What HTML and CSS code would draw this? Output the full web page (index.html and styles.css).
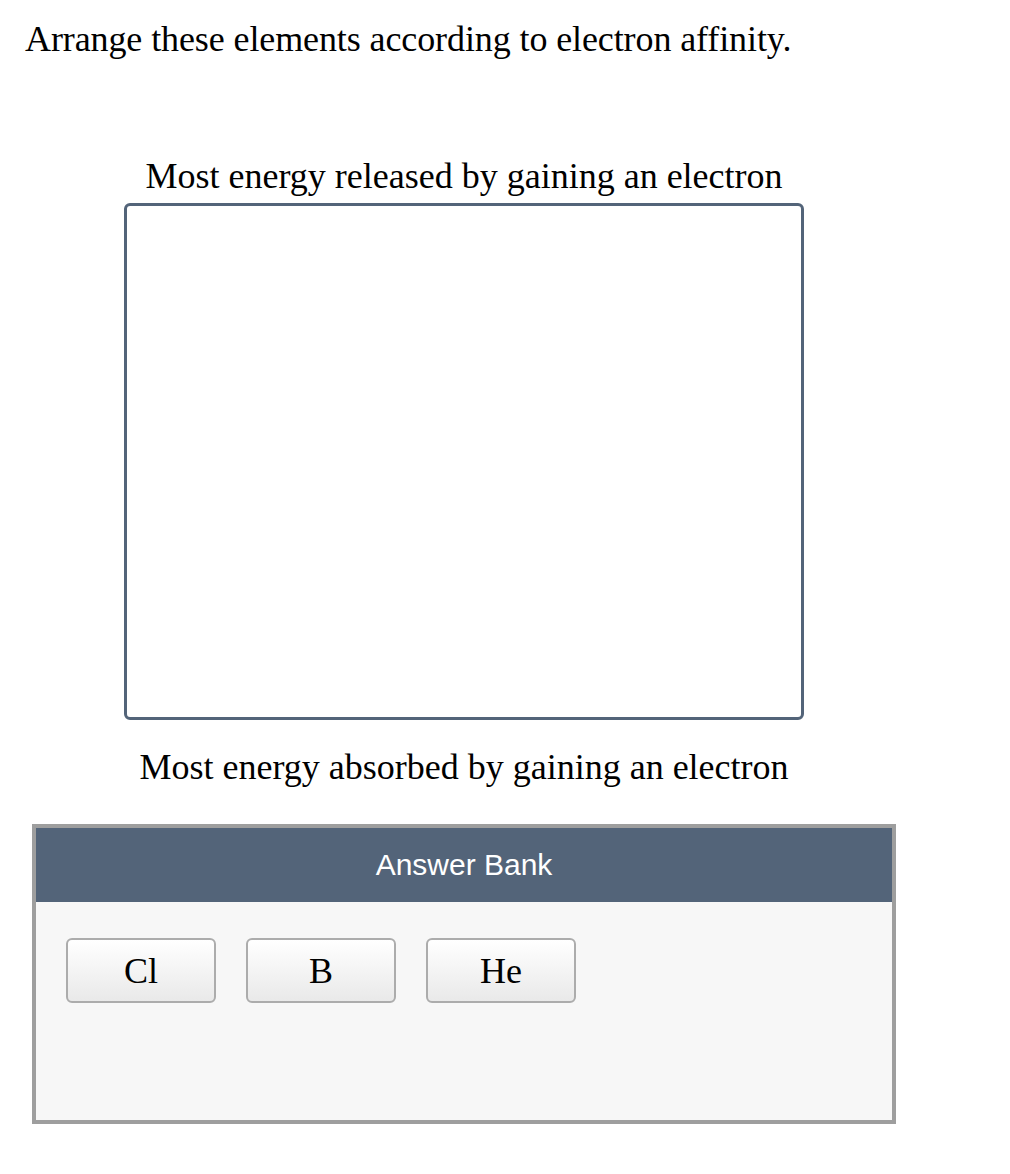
FILE: index.html
```html
<!DOCTYPE html>
<html lang="en">
<head>
    <meta charset="UTF-8">
    <title>Electron Affinity Ranking</title>
    <link rel="stylesheet" href="styles.css">
</head>
<body>
    <p class="prompt">Arrange these elements according to electron affinity.</p>

    <div class="sorter">
        <div class="label label-top">Most energy released by gaining an electron</div>
        <div class="drop-zone" id="dropZone"></div>
        <div class="label label-bottom">Most energy absorbed by gaining an electron</div>

        <div class="answer-bank">
            <div class="bank-header">Answer Bank</div>
            <div class="bank-tiles" id="bankTiles">
                <div class="tile">Cl</div>
                <div class="tile">B</div>
                <div class="tile">He</div>
            </div>
        </div>
    </div>
</body>
</html>
```

FILE: styles.css
```css
body {
    margin: 0;
    font-family: "Liberation Serif", "Times New Roman", serif;
    color: #000;
    background: #fff;
}
.prompt {
    margin: 0;
    padding: 19px 0 0 25px;
    font-size: 36px;
    line-height: 41px;
    letter-spacing: -0.1px;
}
.sorter {
    width: 864px;
    margin-left: 32px;
    display: flex;
    flex-direction: column;
    align-items: center;
}
.label {
    font-size: 36px;
    line-height: 41px;
    text-align: center;
}
.label-top {
    margin-top: 96px;
}
.drop-zone {
    box-sizing: border-box;
    width: 680px;
    height: 517px;
    margin-top: 6px;
    border: 3px solid #536479;
    border-radius: 6px;
    background: #fff;
}
.label-bottom {
    margin-top: 27px;
}
.answer-bank {
    box-sizing: border-box;
    width: 864px;
    height: 300px;
    margin-top: 36px;
    border: 4px solid #9e9e9e;
    background: #f7f7f7;
}
.bank-header {
    height: 74px;
    display: flex;
    align-items: center;
    justify-content: center;
    background: #536479;
    color: #fff;
    font-family: "Liberation Sans", Arial, sans-serif;
    font-size: 30px;
}
.bank-tiles {
    display: flex;
    gap: 30px;
    padding: 36px 30px;
}
.tile {
    box-sizing: border-box;
    width: 150px;
    height: 65px;
    display: flex;
    align-items: center;
    justify-content: center;
    border: 2px solid #acacac;
    border-radius: 6px;
    background: linear-gradient(#ffffff, #e9e9e9);
    font-size: 36px;
    cursor: pointer;
}
```
